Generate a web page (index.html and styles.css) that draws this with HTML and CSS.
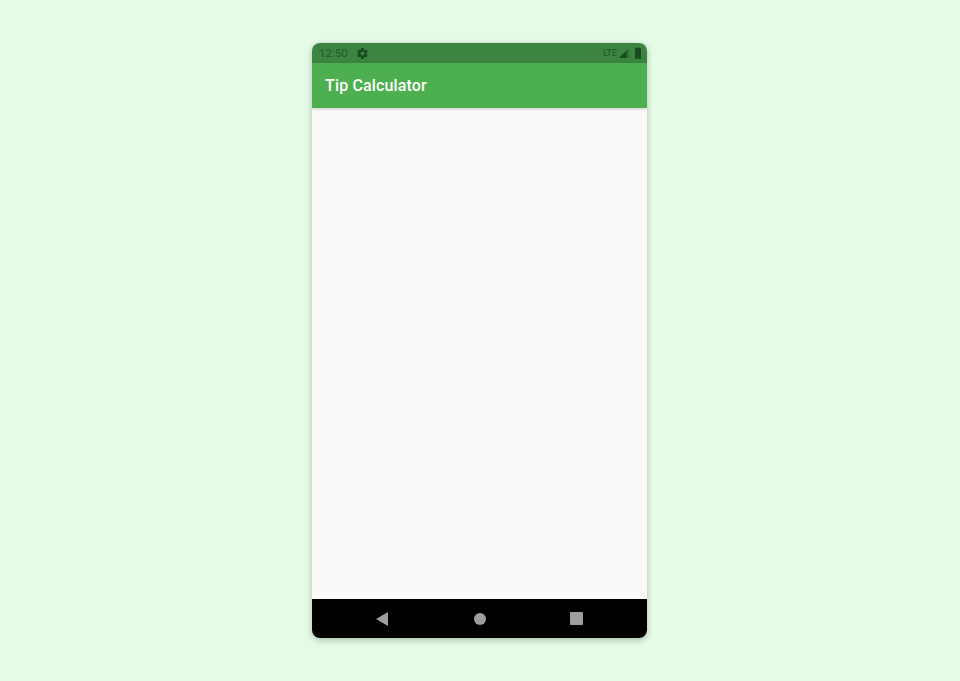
FILE: index.html
```html
<!DOCTYPE html>
<html lang="en">
<head>
  <meta charset="UTF-8">
  <title>Tip Calculator</title>
  <link rel="stylesheet" href="styles.css">
</head>
<body>

  <div class="phone">
    <div class="status-bar">
      <div class="status-left">
        <span class="clock">12:50</span>
        <svg class="gear" viewBox="0 0 24 24" width="13" height="13">
          <path fill-rule="evenodd" d="M19.4 13c.04-.33.06-.66.06-1s-.02-.67-.06-1l2.1-1.65a.5.5 0 0 0 .12-.64l-2-3.46a.5.5 0 0 0-.61-.22l-2.49 1a7.3 7.3 0 0 0-1.73-1l-.38-2.65A.49.49 0 0 0 13.92 2h-4a.49.49 0 0 0-.49.42l-.38 2.65c-.62.25-1.2.59-1.73 1l-2.49-1a.5.5 0 0 0-.61.22l-2 3.46a.5.5 0 0 0 .12.64L4.44 11c-.04.33-.07.66-.07 1s.03.67.07 1l-2.1 1.65a.5.5 0 0 0-.12.64l2 3.46c.12.22.39.3.61.22l2.49-1c.53.41 1.11.75 1.73 1l.38 2.65c.04.24.25.42.49.42h4c.24 0 .45-.18.49-.42l.38-2.65c.62-.25 1.2-.59 1.73-1l2.49 1c.22.08.49 0 .61-.22l2-3.46a.5.5 0 0 0-.12-.64L19.4 13zM12 15.5a3.5 3.5 0 1 1 0-7 3.5 3.5 0 0 1 0 7z"/>
        </svg>
      </div>
      <div class="status-right">
        <span class="lte">LTE</span>
        <svg class="signal" viewBox="0 0 12 12" width="12" height="12">
          <path fill-opacity="0.35" d="M11 1v10H1z"/>
          <path d="M8.5 3.500V11H1z"/>
        </svg>
        <svg class="battery" viewBox="0 0 8 12" width="8" height="12"><path d="M2.600 1.200V.6h2.800v.6h1.300c.2 0 .3.1.3.3v9.900c0 .2-.1.3-.3.3H1.300c-.2 0-.3-.1-.3-.3V1.500c0-.2.1-.3.3-.3z"/></svg>
      </div>
    </div>

    <div class="app-bar">Tip Calculator</div>

    <div class="content"></div>

    <div class="nav-bar">
      <svg viewBox="0 0 12 14" width="12" height="14"><path d="M12 0v14L0 7z"/></svg>
      <svg class="nav-home" viewBox="0 0 12 12" width="12" height="12"><circle cx="6" cy="6" r="6"/></svg>
      <svg viewBox="0 0 13 13" width="13" height="13"><rect width="13" height="13" rx="1"/></svg>
    </div>
  </div>

</body>
</html>
```

FILE: styles.css
```css
* {
  margin: 0;
  box-sizing: border-box;
}

body {
  background-color: #e4fbe6;
  font-family: Roboto, 'Liberation Sans', sans-serif;
  height: 681px;
  overflow: hidden;
  padding-top: 43px;
}

.phone {
  display: flex;
  flex-direction: column;
  width: 335px;
  height: 595px;
  margin-left: 312px;
  border-radius: 8px;
  overflow: hidden;
  box-shadow: 0 2px 6px rgba(0,0,0,0.25);
}

.status-bar {
  display: flex;
  justify-content: space-between;
  align-items: center;
  height: 20px;
  padding: 0 5px 0 7px;
  background-color: #3c8541;
}

.status-left {
  display: flex;
  align-items: center;
  gap: 8px;
}

.clock {
  font-size: 11.5px;
  color: #235c28;
}

.gear {
  fill: #1a4a1e;
}

.status-right {
  display: flex;
  align-items: center;
  fill: #1a4a1e;
}

.lte {
  font-size: 9px;
  color: #1f5424;
  margin-right: 1px;
}

.signal {
  margin-right: 4px;
}

.app-bar {
  display: flex;
  align-items: center;
  height: 45px;
  padding-left: 13px;
  background-color: #4caf50;
  color: white;
  font-size: 16px;
  font-weight: 500;
  letter-spacing: 0.15px;
  box-shadow: 0 1px 3px rgba(0,0,0,0.2);
  position: relative;
}

.content {
  flex: 1;
  background-color: #fafafa;
}

.nav-bar {
  display: flex;
  justify-content: space-between;
  align-items: center;
  height: 39px;
  padding: 0 64px;
  background-color: #000;
  fill: #9e9e9e;
}

.nav-home {
  margin-left: 2px;
}
```
